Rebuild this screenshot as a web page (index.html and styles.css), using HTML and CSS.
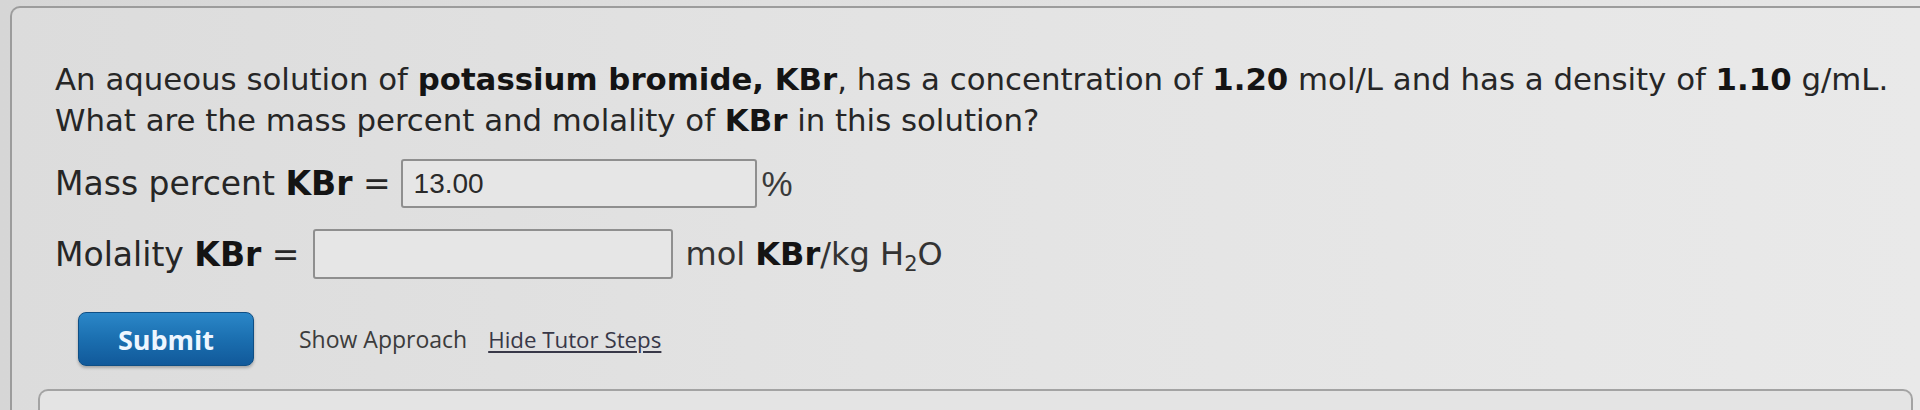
FILE: index.html
```html
<!DOCTYPE html>
<html lang="en">
<head>
<meta charset="utf-8">
<title>KBr solution</title>
<link rel="stylesheet" href="styles.css">
</head>
<body>
<div class="card">
  <div class="content">
    <p class="question">An aqueous solution of <b>potassium bromide, KBr</b>, has a concentration of <b>1.20</b> mol/L and has a density of <b>1.10</b> g/mL.<br>What are the mass percent and molality of <b>KBr</b> in this solution?</p>
    <div class="row row-mass">
      <span class="label">Mass percent <b>KBr</b> =</span>
      <input class="answer answer-mass" type="text" value="13.00" readonly>
      <span class="unit-pct">%</span>
    </div>
    <div class="row row-molal">
      <span class="label">Molality <b>KBr</b> =</span>
      <input class="answer answer-molal" type="text" value="" readonly>
      <span class="unit">mol <b>KBr</b>/kg H<sub>2</sub>O</span>
    </div>
    <div class="actions">
      <button class="submit" type="button">Submit</button>
      <span class="link plain">Show Approach</span>
      <span class="link under">Hide Tutor Steps</span>
    </div>
  </div>
  <div class="next-box"></div>
</div>
</body>
</html>
```

FILE: styles.css
```css
html, body {
  margin: 0;
  padding: 0;
}
body {
  width: 1920px;
  height: 410px;
  overflow: hidden;
  background: linear-gradient(90deg, #d6d6d6 0%, #dfdfdf 40%, #e6e6e6 100%);
  font-family: "DejaVu Sans", Verdana, sans-serif;
  color: #262626;
}
.card {
  margin: 6px 0 0 10px;
  border: 2px solid #9c9c9c;
  border-right: none;
  border-bottom: none;
  border-radius: 10px 0 0 0;
  background: linear-gradient(90deg, #dcdcdc 0%, #e3e3e3 45%, #e9e9e9 100%);
  padding: 51px 0 0 26px;
  height: 404px;
  box-sizing: border-box;
  overflow: hidden;
}
.content {
  padding-left: 17px;
}
.question {
  margin: 0;
  font-size: 30.8px;
  line-height: 41px;
}
.question b, .label b, .unit b {
  color: #141414;
}
.row {
  display: flex;
  align-items: center;
  font-size: 33px;
}
.row-mass {
  margin-top: 18px;
}
.row-molal {
  margin-top: 21px;
}
.label {
  white-space: nowrap;
}
.answer {
  box-sizing: border-box;
  border: 2px solid #8f8f8f;
  border-radius: 3px;
  background: #e6e6e6;
  font-family: "Liberation Sans", Arial, sans-serif;
  font-size: 28px;
  color: #2a2a2a;
  padding: 0 0 0 11px;
  outline: none;
}
.answer-mass {
  width: 356px;
  height: 49px;
  margin-left: 10px;
}
.answer-molal {
  width: 360px;
  height: 50px;
  margin-left: 13px;
}
.unit-pct {
  font-family: "Liberation Sans", Arial, sans-serif;
  font-size: 35px;
  margin-left: 5px;
  color: #3a3a3a;
}
.unit {
  font-size: 32px;
  margin-left: 13px;
  color: #333;
}
.unit sub {
  font-size: 21px;
  vertical-align: -6px;
  line-height: 0;
}
.actions {
  display: flex;
  align-items: center;
  margin-top: 33px;
  padding-left: 23px;
}
.submit {
  width: 176px;
  height: 54px;
  border: 1px solid #0f4f85;
  border-radius: 8px;
  background: linear-gradient(180deg, #2b87c8 0%, #1b6fb0 50%, #11599a 100%);
  box-shadow: 0 2px 3px rgba(0, 0, 0, 0.25);
  color: #eef6ff;
  font-family: "Open Sans", sans-serif;
  font-weight: 700;
  font-size: 27px;
  padding: 0;
}
.link {
  font-family: "Open Sans", sans-serif;
  font-size: 23px;
  color: #3c3c3c;
}
.plain {
  margin-left: 45px;
}
.under {
  margin-left: 21px;
  font-size: 22.3px;
  color: #383848;
  text-decoration: underline;
  text-underline-offset: 3px;
}
.next-box {
  margin: 23px 7px 0 0;
  height: 19px;
  border: 2px solid #a3a3a3;
  border-bottom: none;
  border-radius: 10px 10px 0 0;
  background: #e4e4e4;
}
```
